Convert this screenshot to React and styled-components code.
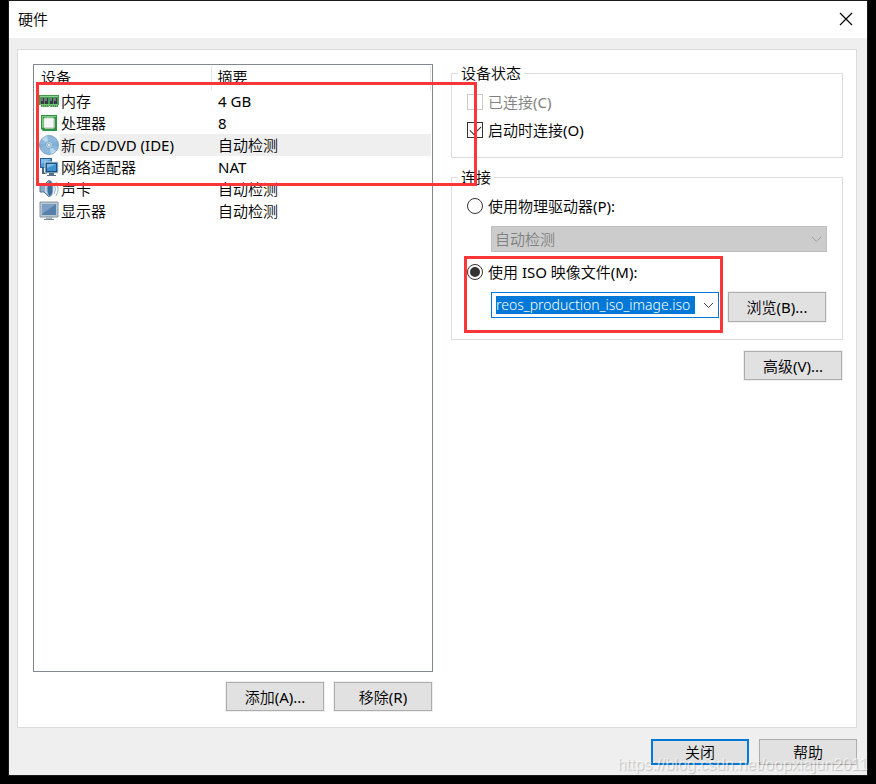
import React, { useState } from "react";
import styled, { createGlobalStyle } from "styled-components";

const GlobalStyle = createGlobalStyle`
  * {
    box-sizing: border-box;
  }
  body {
    margin: 0;
    background: #000;
    color: #000;
    font-family: "Noto Sans", "Noto Sans CJK SC DemiLight", "Noto Sans CJK SC", sans-serif;
    font-size: 15px;
    font-weight: 400;
    line-height: 22px;
  }
  button, input, select {
    font: inherit;
    color: inherit;
  }
`;

const Screen = styled.div`
  position: relative;
  display: flex;
  min-height: 100vh;
  padding: 1px 9px 9px;
  overflow: hidden;
`;

const Dialog = styled.main`
  flex: 1;
  min-width: 0;
  display: flex;
  flex-direction: column;
  background: #efefef;
  box-shadow: 0 0 0 1px #1a1a1a;
`;

const TitleBar = styled.header`
  display: flex;
  justify-content: space-between;
  align-items: center;
  height: 37px;
  padding: 0 14px 2px 9px;
  background: #fff;
`;

const Title = styled.h1`
  margin: 0;
  font-size: 15px;
  font-weight: 400;
`;

const CloseButton = styled.button`
  display: flex;
  padding: 0;
  border: 0;
  background: none;
`;

const Panel = styled.section`
  position: relative;
  flex: 1;
  display: grid;
  grid-template-columns: minmax(0, 400fr) minmax(0, 392fr);
  gap: 18px;
  margin: 11px 10px 0 8px;
  padding: 14px 13px 16px 15px;
  border: 1px solid #dcdcdc;
  background: #fff;
`;

const ListColumn = styled.div`
  display: flex;
  flex-direction: column;
`;

const ListBox = styled.div`
  flex: 1;
  border: 1px solid #828790;
  padding: 1px;
`;

const DeviceTable = styled.table`
  width: 100%;
  table-layout: fixed;
  border-collapse: collapse;
`;

const HeadCell = styled.th`
  width: ${(props) => props.$width || "auto"};
  height: 24px;
  padding: 0 6px 2px;
  border-right: 1px solid #e5e5e5;
  font-weight: 400;
  text-align: left;
`;

const Row = styled.tr`
  height: 22px;
  background: ${(props) => (props.$selected ? "#efefef" : "#fff")};
`;

const Cell = styled.td`
  padding: 0 0 0 ${(props) => props.$indent || 0}px;
  white-space: nowrap;
`;

const Device = styled.div`
  display: flex;
  gap: 1px;
`;

const IconBox = styled.span`
  display: flex;
  align-items: center;
  padding-left: 4px;
  background: #fff;
`;

const ButtonRow = styled.div`
  display: flex;
  justify-content: flex-end;
  gap: 10px;
  padding: ${(props) => props.$top}px ${(props) => props.$right || 0}px 0 0;
`;

const Button = styled.button`
  width: 98px;
  height: ${(props) => props.$height || 29}px;
  padding: 0;
  border: ${(props) => (props.$primary ? "2px solid #0078d7" : "1px solid #adadad")};
  background: #e1e1e1;
  box-shadow: 0 0 0 1px #efefef;
  white-space: nowrap;
`;

const Settings = styled.div`
  display: flex;
  flex-direction: column;
  gap: 8px;
  margin-top: -2px;
`;

const Group = styled.fieldset`
  min-width: 0;
  margin: 0;
  padding: 0 15px 16px 6px;
  border: 1px solid #dcdcdc;
`;

const Legend = styled.legend`
  padding: 0 3px;
`;

const Fields = styled.div`
  display: flex;
  flex-direction: column;
  gap: ${(props) => props.$gap}px;
  padding: 7px 0 0 9px;
`;

const Option = styled.label`
  display: flex;
  align-items: center;
  gap: 5px;
  color: ${(props) => (props.$disabled ? "#808080" : "#000")};
`;

const CheckBox = styled.input`
  appearance: none;
  width: 16px;
  height: 16px;
  margin: 0;
  border: 1px solid #333;
  background: #fff;
  display: grid;
  place-items: center;

  &:disabled {
    border-color: #ccc;
  }
  &:checked::after {
    content: "";
    width: 10px;
    height: 5px;
    border: solid #333;
    border-width: 0 0 1px 1px;
    transform: translateY(-1px) rotate(-45deg);
  }
`;

const Radio = styled.input`
  appearance: none;
  width: 16px;
  height: 16px;
  margin: 0;
  border: 1px solid #333;
  border-radius: 50%;
  background: #fff;
  display: grid;
  place-items: center;

  &:checked::after {
    content: "";
    width: 10px;
    height: 10px;
    border-radius: 50%;
    background: #333;
  }
`;

const DriveBox = styled.div`
  display: flex;
  align-items: center;
  height: 26px;
  margin-left: 24px;
  padding-right: 4px;
  border: 1px solid #bfbfbf;
  background: #ccc;
`;

const DriveSelect = styled.select`
  appearance: none;
  flex: 1;
  padding: 0 3px;
  border: 0;
  background: none;
  color: #808080;
  opacity: 1;
`;

const ImageRow = styled.div`
  display: flex;
  align-items: flex-start;
  gap: 9px;
  margin-left: 24px;
  padding-right: 1px;
`;

const ImageBox = styled.div`
  flex: 1;
  display: flex;
  align-items: center;
  gap: 8px;
  height: 26px;
  min-width: 0;
  padding: 0 4px;
  border: 1px solid #0078d7;
  background: #fff;
`;

const ImageInput = styled.input`
  flex: 1;
  min-width: 0;
  height: 18px;
  padding: 0;
  border: 0;
  outline: 0;
  background: #0078d7;
  color: #fff;
  font-size: 14px;
  font-weight: 350;
`;

const DropButton = styled.button`
  display: flex;
  padding: 0;
  border: 0;
  background: none;
`;

const ImageFields = styled.div`
  display: flex;
  flex-direction: column;
  gap: 9px;
  padding-bottom: 1px;
`;

// red marker drawn over the dialog
const Marker = styled.div`
  position: absolute;
  top: ${(props) => props.$top}px;
  left: ${(props) => props.$left}px;
  width: ${(props) => props.$width}px;
  height: ${(props) => props.$height}px;
  border: 3px solid #fb3639;
  pointer-events: none;
`;

const Watermark = styled.div`
  position: absolute;
  right: 8px;
  bottom: 8px;
  color: rgba(255, 255, 255, 0.6);
  font-family: "Liberation Sans", sans-serif;
  font-size: 16px;
  text-shadow: 1px 1px 1px rgba(0, 0, 0, 0.2);
  pointer-events: none;
`;

const Chevron = ({ color }) => (
  <svg width="11" height="7" viewBox="0 0 11 7" fill="none" stroke={color}>
    <path d="M1 1l4.500 4.500L10 1" />
  </svg>
);

const MemoryIcon = () => (
  <svg width="21" height="20" viewBox="0 0 21 20">
    <path d="M0 4h20v10h-1v2h-8v-1h-1v1H2v-2H0z" fill="#3f9d4d" />
    <path d="M1 5h18v1H1z" fill="#8bd08f" />
    <path d="M1 13h18v1H1z" fill="#75c07a" />
    <path d="M2 7h3v6H2zM6 7h3v6H6zM11 7h3v6h-3zM15 7h3v6h-3z" fill="#3b3648" />
    <path d="M2 7h2v3H2zM6 7h2v3H6zM11 7h2v3h-2zM15 7h2v3h-2z" fill="#77708a" />
    <path d="M3 15h7M11 15h7" stroke="#b9d69e" strokeDasharray="1 1" />
  </svg>
);

const CpuIcon = () => (
  <svg width="21" height="20" viewBox="0 0 21 20">
    <path d="M2 2h16v16H4l-2-2z" fill="#2f9344" />
    <path d="M3 3h14v1H3zM3 3h1v12H3z" fill="#7fca83" />
    <rect x="5" y="5" width="10" height="10" rx="1" fill="#f6f6f5" stroke="#d5e3d4" />
    <path d="M6 15h9V6" fill="none" stroke="#bec5c0" />
  </svg>
);

const DiscIcon = () => (
  <svg width="21" height="20" viewBox="0 0 21 20">
    <circle cx="10" cy="10" r="9.500" fill="#8fb9db" stroke="#7ba6c9" />
    <path d="M10 10L3 4A10 10 0 0 1 8 1z" fill="#b9d8ee" />
    <path d="M10 10l7 6a10 10 0 0 1-5 3z" fill="#b9d8ee" />
    <path d="M10 10L1 9v4zM10 10l9-4v6z" fill="#6b9fcd" opacity=".4" />
    <circle cx="10" cy="10" r="3.500" fill="#b9d5e8" stroke="#79a8cb" />
    <circle cx="10" cy="10" r="1.500" fill="#fff" stroke="#8bb2cd" />
  </svg>
);

const NetworkIcon = () => (
  <svg width="21" height="20" viewBox="0 0 21 20">
    <path d="M1 1h12v10H1z" fill="#285f94" />
    <path d="M2 2h10v8H2z" fill="#4d9bd6" />
    <path d="M2 2h10L2 7z" fill="#7dbbe8" />
    <path d="M4 11v5h4" fill="none" stroke="#496579" strokeWidth="2" />
    <path d="M6 5h13v11H6z" fill="#1d527f" stroke="#d4e1e9" />
    <path d="M8 7h9v7H8z" fill="#3f93d3" />
    <path d="M8 7h9l-9 4z" fill="#7dbdea" />
    <path d="M10 16h5v2h-5zM8 18h9v1H8z" fill="#587083" />
  </svg>
);

const SoundIcon = () => (
  <svg width="21" height="20" viewBox="0 0 21 20" fill="none">
    <path d="M1 6h4l5-5c2 4 2 13 0 17l-5-5H1z" fill="#8aa9c2" stroke="#54799b" />
    <path d="M6 6l4-4v15l-4-4z" fill="#c3d8e6" />
    <ellipse cx="11" cy="9.500" rx="3" ry="8" fill="#3c6c9c" stroke="#9bb7cd" />
    <path d="M15 5q3 5 0 10M17 3q4 7 0 14" stroke="#92afc4" />
  </svg>
);

const DisplayIcon = () => (
  <svg width="21" height="20" viewBox="0 0 21 20">
    <path d="M1 1h18v15H1z" fill="#b9c6d2" stroke="#8695a3" />
    <path d="M3 3h14v11H3z" fill="#5580ac" />
    <path d="M3 3h14L3 13z" fill="#7c9fc3" />
    <path d="M7 16h6v2H7z" fill="#a7b2bb" />
    <path d="M5 18h10v1H5z" fill="#7c8d9b" />
  </svg>
);

const devices = [
  { name: "内存", summary: "4 GB", Icon: MemoryIcon },
  { name: "处理器", summary: "8", Icon: CpuIcon },
  { name: "新 CD/DVD (IDE)", summary: "自动检测", Icon: DiscIcon },
  { name: "网络适配器", summary: "NAT", Icon: NetworkIcon },
  { name: "声卡", summary: "自动检测", Icon: SoundIcon },
  { name: "显示器", summary: "自动检测", Icon: DisplayIcon },
];

const DeviceList = () => {
  const [selected, setSelected] = useState(2);

  return (
    <ListBox>
      <DeviceTable>
        <thead>
          <tr>
            <HeadCell $width="176px">设备</HeadCell>
            <HeadCell>摘要</HeadCell>
          </tr>
        </thead>
        <tbody>
          {devices.map(({ name, summary, Icon }, i) => (
            <Row key={name} $selected={i === selected} onClick={() => setSelected(i)}>
              <Cell>
                <Device>
                  <IconBox>
                    <Icon />
                  </IconBox>
                  {name}
                </Device>
              </Cell>
              <Cell $indent={7}>{summary}</Cell>
            </Row>
          ))}
        </tbody>
      </DeviceTable>
    </ListBox>
  );
};

const DeviceSettings = () => {
  const [connect, setConnect] = useState(true);
  const [source, setSource] = useState("iso");
  const [image, setImage] = useState("reos_production_iso_image.iso");

  return (
    <Settings>
      <Group>
        <Legend>设备状态</Legend>
        <Fields $gap={6}>
          <Option $disabled>
            <CheckBox type="checkbox" disabled />
            已连接(C)
          </Option>
          <Option>
            <CheckBox
              type="checkbox"
              checked={connect}
              onChange={(e) => setConnect(e.target.checked)}
            />
            启动时连接(O)
          </Option>
        </Fields>
      </Group>
      <Group>
        <Legend>连接</Legend>
        <Fields $gap={9}>
          <Option>
            <Radio
              type="radio"
              name="source"
              checked={source === "drive"}
              onChange={() => setSource("drive")}
            />
            使用物理驱动器(P):
          </Option>
          <DriveBox>
            <DriveSelect aria-label="物理驱动器" disabled={source !== "drive"}>
              <option>自动检测</option>
            </DriveSelect>
            <Chevron color="#a0a0a0" />
          </DriveBox>
          <ImageFields>
            <Option>
              <Radio
                type="radio"
                name="source"
                checked={source === "iso"}
                onChange={() => setSource("iso")}
              />
              使用 ISO 映像文件(M):
            </Option>
            <ImageRow>
              <ImageBox>
                <ImageInput
                  aria-label="ISO 映像文件"
                  value={image}
                  onChange={(e) => setImage(e.target.value)}
                />
                <DropButton aria-label="展开">
                  <Chevron color="#444" />
                </DropButton>
              </ImageBox>
              <Button $height={30}>浏览(B)...</Button>
            </ImageRow>
          </ImageFields>
        </Fields>
      </Group>
      <ButtonRow $top={3} $right={1}>
        <Button>高级(V)...</Button>
      </ButtonRow>
    </Settings>
  );
};

const Footer = styled.footer`
  padding: 0 10px 10px;
`;

const App = () => (
  <>
    <GlobalStyle />
    <Screen>
      <Dialog>
        <TitleBar>
          <Title>硬件</Title>
          <CloseButton aria-label="关闭窗口">
            <svg width="14" height="14" viewBox="0 0 14 14" stroke="#000" strokeWidth="1.200">
              <path d="M1 1l12 12M13 1L1 13" />
            </svg>
          </CloseButton>
        </TitleBar>
        <Panel>
          <ListColumn>
            <DeviceList />
            <ButtonRow $top={10} $right={1}>
              <Button>添加(A)...</Button>
              <Button>移除(R)</Button>
            </ButtonRow>
          </ListColumn>
          <DeviceSettings />
          <Marker $top={32} $left={18} $width={441} $height={104} />
          <Marker $top={206} $left={446} $width={259} $height={77} />
        </Panel>
        <Footer>
          <ButtonRow $top={11}>
            <Button $height={26} $primary>
              关闭
            </Button>
            <Button $height={26}>帮助</Button>
          </ButtonRow>
        </Footer>
      </Dialog>
      <Watermark>https://blog.csdn.net/oopxiajun2011</Watermark>
    </Screen>
  </>
);

export default App;
